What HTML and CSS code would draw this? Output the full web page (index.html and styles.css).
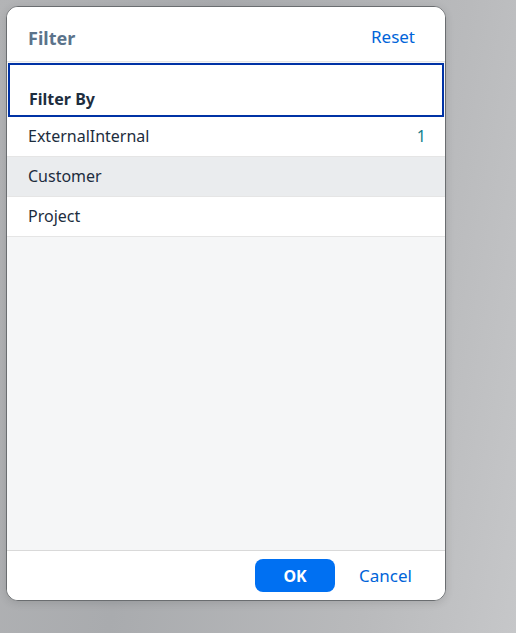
FILE: index.html
```html
<!DOCTYPE html>
<html>
<head>
<meta charset="utf-8">
<link rel="stylesheet" href="styles.css">
</head>
<body>
<div class="dialog">
  <header class="head">
    <h1 class="title">Filter</h1>
    <a class="link">Reset</a>
  </header>
  <div class="content">
    <div class="group"><span>Filter By</span></div>
    <ul class="list">
      <li class="item"><span>ExternalInternal</span><span class="count">1</span></li>
      <li class="item hover"><span>Customer</span></li>
      <li class="item"><span>Project</span></li>
    </ul>
  </div>
  <footer class="foot">
    <button class="btn ok">OK</button>
    <button class="btn cancel">Cancel</button>
  </footer>
</div>
</body>
</html>
```
FILE: styles.css
```css
html, body {
  margin: 0;
  height: 100%;
}
body {
  background: linear-gradient(100deg, #b3b4b6 0%, #a9abae 35%, #b9babc 75%, #c6c7c9 100%);
  font-family: "Noto Sans", "Liberation Sans", sans-serif;
  padding: 6px 0 0 6px;
  box-sizing: border-box;
}
.dialog {
  width: 440px;
  height: 595px;
  box-sizing: border-box;
  border: 1px solid #6a6d70;
  border-radius: 12px;
  background: #f5f6f7;
  display: flex;
  flex-direction: column;
  overflow: hidden;
  box-shadow: 0 2px 8px rgba(0,0,0,0.12);
}
.head {
  height: 55px;
  box-sizing: border-box;
  background: #fff;
  border-bottom: 1px solid #e5e5e5;
  display: flex;
  align-items: center;
  justify-content: space-between;
  padding: 5px 30px 0 21px;
}
.title {
  margin: 0;
  font-size: 18px;
  font-weight: 700;
  color: #5b738b;
  position: relative;
  top: 1px;
}
.link {
  font-size: 17px;
  color: #0064d9;
}
.content {
  flex: 1;
}
.group {
  background: #fff;
  height: 54px;
  box-sizing: border-box;
  margin: 1px 1px 0 1px;
  border: 2px solid #0032a5;
  display: flex;
  align-items: flex-end;
  padding: 0 0 5px 19px;
  font-size: 16px;
  font-weight: 700;
  color: #1d2d3e;
}
.list {
  list-style: none;
  margin: 0;
  padding: 0;
}
.item {
  height: 40px;
  box-sizing: border-box;
  background: #fff;
  border-bottom: 1px solid #e5e5e5;
  display: flex;
  align-items: center;
  justify-content: space-between;
  padding: 0 19px 2px 21px;
  font-size: 16px;
  color: #1d2d3e;
}
.item.hover {
  background: #eaecee;
}
.count {
  color: #167e8c;
}
.foot {
  height: 50px;
  box-sizing: border-box;
  background: #fff;
  border-top: 1px solid #d9d9d9;
  display: flex;
  align-items: center;
  justify-content: flex-end;
  padding: 0 27px 0 0;
  gap: 18px;
}
.btn {
  font-family: inherit;
  font-size: 16px;
  border: none;
  cursor: pointer;
}
.ok {
  width: 80px;
  height: 33px;
  border-radius: 8px;
  background: #0070f2;
  color: #fff;
  font-weight: 700;
}
.cancel {
  background: none;
  color: #0064d9;
  padding: 0 6px;
  height: 33px;
  font-size: 17px;
}
```
